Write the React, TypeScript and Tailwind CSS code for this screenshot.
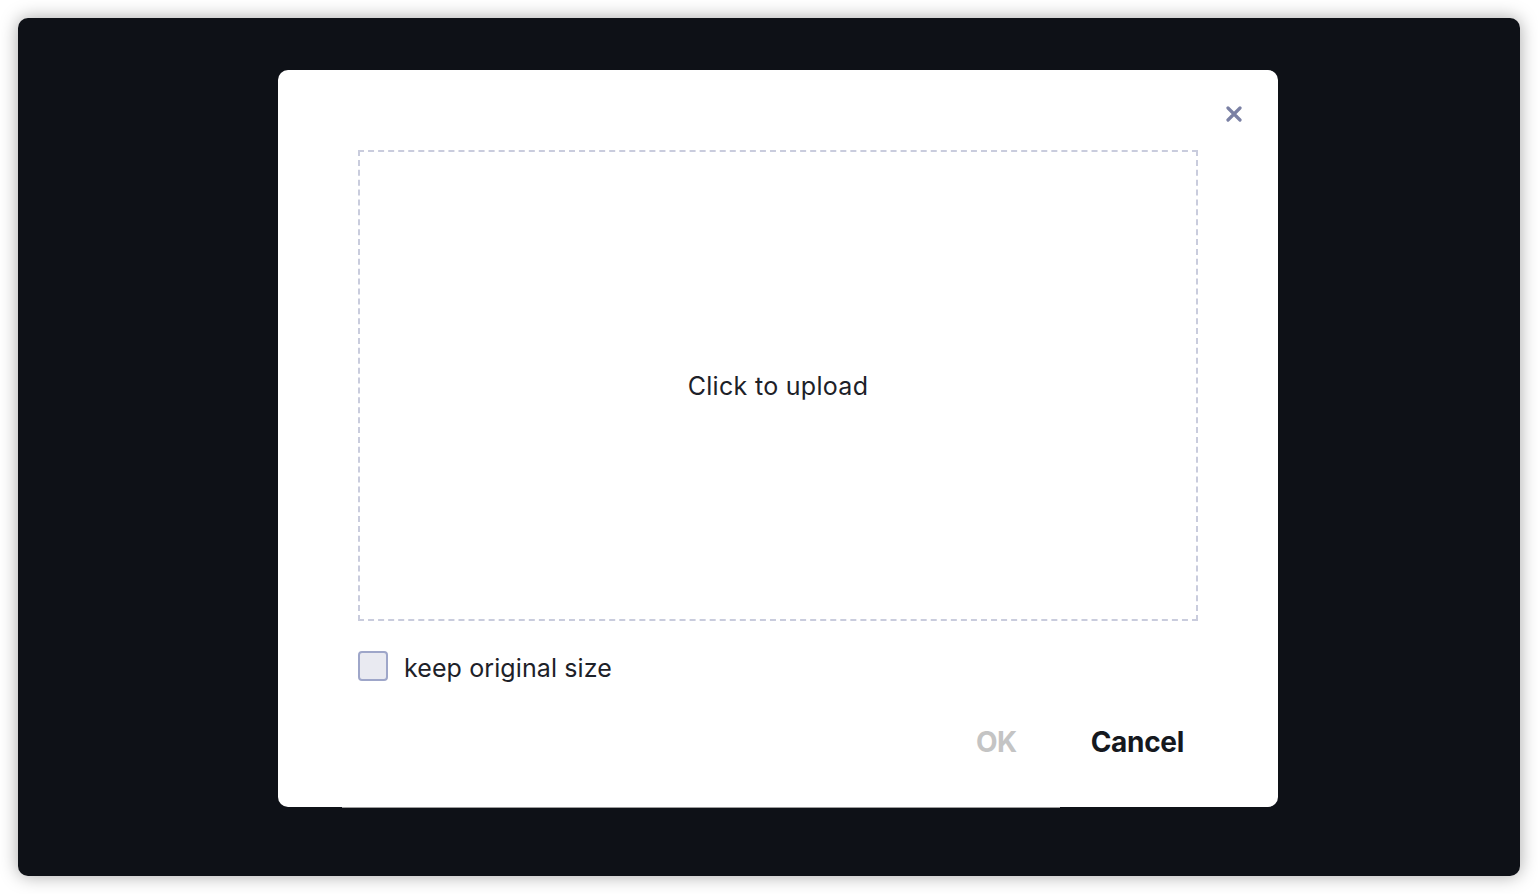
import React from "react";

function CloseIcon() {
  return (
    <svg width="16" height="16" viewBox="0 0 16 16" fill="none">
      <path d="M2 2 L14 14 M14 2 L2 14" stroke="#7a80a4" strokeWidth="3.2" strokeLinecap="round" />
    </svg>
  );
}

export default function App() {
  return (
    <div
      className="w-[1538px] h-[894px] bg-white p-[18px] flex"
      style={{ fontFamily: "Inter, 'Noto Sans', sans-serif" }}
    >
      <div className="flex-1 rounded-[10px] bg-[#0e1117] shadow-[0_0_18px_rgba(0,0,0,0.35)] pl-[260px] pt-[52px]">
        <div className="relative w-[1000px] h-[737px] rounded-[10px] bg-white px-[80px] pt-[80px] flex flex-col">
          <button className="absolute top-[36px] right-[36px] w-[16px] h-[16px] flex items-center justify-center">
            <CloseIcon />
          </button>

          <div className="h-[471px] border-2 border-dashed border-[#c9ccdd] flex items-center justify-center">
            <span className="text-[25px] text-[#1d2128] tracking-[0.3px] pt-[3px]">Click to upload</span>
          </div>

          <label className="mt-[29px] flex items-center gap-[16px]">
            <span className="w-[30px] h-[30px] rounded-[4px] border-2 border-[#9ea6c9] bg-[#e9eaf1]" />
            <span className="text-[25px] text-[#1d2128] leading-none pt-[6px] tracking-[0.1px]">keep original size</span>
          </label>

          <div className="mt-[40px] flex justify-end items-center gap-[74px] pr-[14px]">
            <span className="text-[28px] font-bold text-[#c4c4c4] tracking-[-0.5px]">OK</span>
            <span className="text-[28px] font-bold text-[#15181e] tracking-[-0.3px]">Cancel</span>
          </div>

          <div className="absolute left-[64px] top-full w-[718px] h-[1px] bg-[#9c9c9c]" />
        </div>
      </div>
    </div>
  );
}
